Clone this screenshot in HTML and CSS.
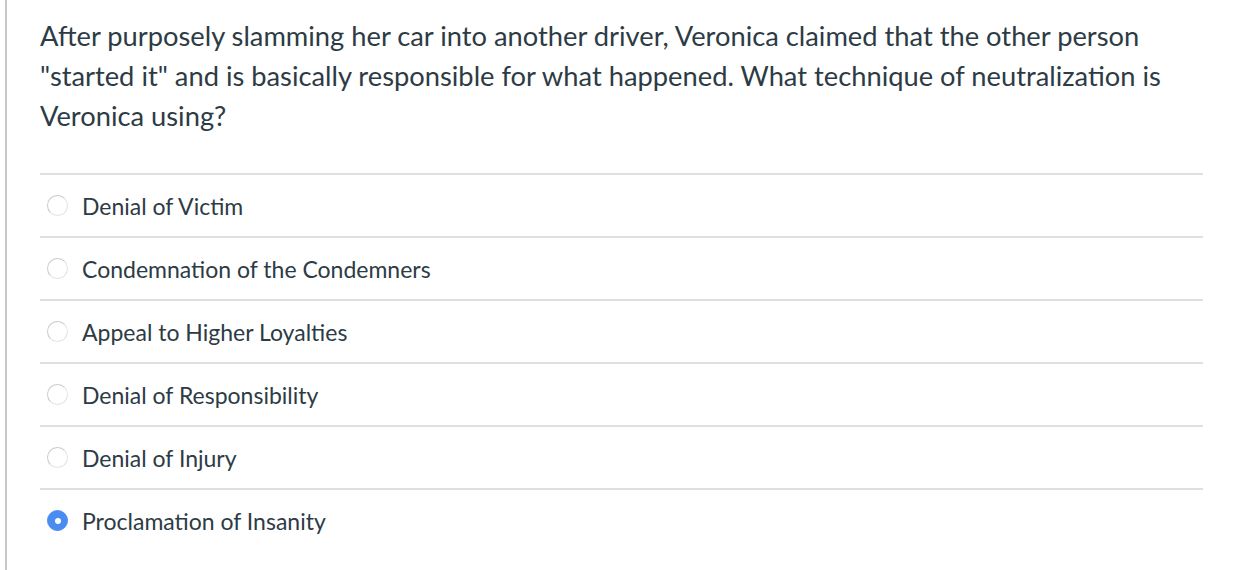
FILE: index.html
```html
<!DOCTYPE html>
<html>
<head>
<meta charset="utf-8">
<link rel="stylesheet" href="styles.css">
</head>
<body>
<div class="quiz">
  <p class="question">After purposely slamming her car into another driver, Veronica claimed that the other person "started it" and is basically responsible for what happened. What technique of neutralization is Veronica using?</p>
  <ul class="answers">
    <li class="answer"><span class="radio"></span><span class="label">Denial of Victim</span></li>
    <li class="answer"><span class="radio"></span><span class="label">Condemnation of the Condemners</span></li>
    <li class="answer"><span class="radio"></span><span class="label">Appeal to Higher Loyalties</span></li>
    <li class="answer"><span class="radio"></span><span class="label">Denial of Responsibility</span></li>
    <li class="answer"><span class="radio"></span><span class="label">Denial of Injury</span></li>
    <li class="answer"><span class="radio checked"></span><span class="label">Proclamation of Insanity</span></li>
  </ul>
</div>
</body>
</html>
```

FILE: styles.css
```css
html, body {
  margin: 0;
  padding: 0;
  background: #ffffff;
}
body {
  font-family: Lato, "Open Sans", sans-serif;
  color: #2d3b45;
}
.quiz {
  margin-left: 5px;
  border-left: 2px solid #c8c8c8;
  min-height: 570px;
  padding: 16px 31px 0 33px;
  box-sizing: border-box;
}
.question {
  margin: 0;
  font-size: 27.3px;
  line-height: 40px;
  max-width: 1165px;
}
.answers {
  list-style: none;
  margin: 37px 0 0 0;
  padding: 0;
}
.answer {
  display: flex;
  align-items: center;
  height: 63px;
  border-top: 2px solid #e0e0e0;
  box-sizing: border-box;
  padding-left: 7px;
}
.radio {
  width: 21px;
  height: 21px;
  border-radius: 50%;
  border: 1px solid #cacaca;
  border-bottom-color: #e2e2e2;
  border-right-color: #e2e2e2;
  box-sizing: border-box;
  margin-right: 14px;
  flex: none;
  position: relative;
  background: #fff;
}
.radio.checked {
  background: #4a8cf0;
  border-color: #4a8cf0;
}
.radio.checked::after {
  content: "";
  position: absolute;
  width: 6px;
  height: 6px;
  border-radius: 50%;
  background: #fff;
  left: 6.5px;
  top: 6.5px;
}
.label {
  font-size: 23px;
}
```
